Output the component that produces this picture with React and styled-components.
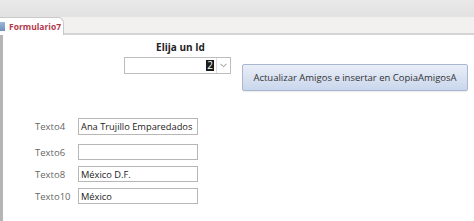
import styled, {createGlobalStyle} from "styled-components";

const GlobalStyle = createGlobalStyle`
  html, body {
    margin: 0;
    padding: 0;
    background: #ffffff;
  }
  body {
    font-family: "Open Sans", "Liberation Sans", sans-serif;
    width: 474px;
    height: 221px;
    overflow: hidden;
  }
`

const Frame = styled.div`
  width: 474px;
  height: 221px;
  display: flex;
  flex-direction: column;
  background: #ffffff;
`
const TopBand = styled.div`
  height: 17px;
  background: linear-gradient(#e9e9e9, #e2e2e2);
`
const TabBar = styled.div`
  height: 16px;
  background: #f2f1ef;
  border-bottom: 2px solid #d4d4d4;
  display: flex;
  align-items: flex-end;
`
const Tab = styled.div`
  height: 17px;
  margin-bottom: -2px;
  width: 63px;
  background: #ffffff;
  border: 1px solid #c9c9c9;
  border-bottom: none;
  border-left: none;
  border-radius: 0 6px 0 0;
  display: flex;
  align-items: center;
  gap: 4px;
  font-size: 8.5px;
  font-weight: 700;
  color: #b3384a;
`
const TabIcon = styled.div`
  width: 5px;
  height: 9px;
  background: linear-gradient(#9fb7d8, #6f8fbf);
`
const Body = styled.div`
  flex: 1;
  display: flex;
  border-left: 3px solid #b5b5b5;
`
const Form = styled.div`
  flex: 1;
  display: flex;
  flex-direction: column;
`
const TopRow = styled.div`
  display: flex;
  padding-top: 5px;
`
const IdBlock = styled.div`
  width: 107px;
  margin-left: 121px;
  display: flex;
  flex-direction: column;
  align-items: center;
`
const IdLabel = styled.div`
  font-size: 10px;
  font-weight: 700;
  color: #222;
  height: 15px;
  line-height: 15px;
  margin-left: 6px;
`
const Combo = styled.div`
  margin-top: 2px;
  width: 105px;
  height: 15px;
  border: 1px solid #bdbdbd;
  display: flex;
  align-items: center;
  justify-content: flex-end;
  font-size: 10px;
  color: #fff;
`
const Selected = styled.span`
  background: #1a1a1a;
  line-height: 11px;
  padding: 0 1px;
`
const Arrow = styled.div`
  width: 13px;
  height: 100%;
  border-left: 1px solid #dcdcdc;
  display: flex;
  align-items: center;
  justify-content: center;
  margin-left: 2px;
`
const ActionBtn = styled.div`
  margin-left: 11px;
  margin-top: 24px;
  width: 224px;
  height: 25px;
  border: 1px solid #a9b8d0;
  border-radius: 2px;
  background: linear-gradient(#e9eef7, #c9d6ec);
  display: flex;
  align-items: center;
  justify-content: center;
  font-size: 9.5px;
  color: #333;
  box-shadow: 0 1px 1px rgba(0,0,0,0.08);
`
const Fields = styled.div`
  display: grid;
  grid-template-columns: 75px 120px;
  margin-top: 27px;
`
const FieldRow = styled.div`
  display: contents;
`
const Label = styled.div`
  padding-left: 32px;
  margin-top: ${p => p.$mt}px;
  font-size: 9.5px;
  color: #666;
  display: flex;
  align-items: center;
  height: ${p => p.$h}px;
`
const Input = styled.div`
  margin-top: ${p => p.$mt}px;
  height: ${p => p.$h - 2}px;
  border: 1px solid #b7b7b7;
  padding-left: 2px;
  display: flex;
  align-items: center;
  font-size: 9.3px;
  color: #222;
  white-space: nowrap;
`

const fields = [
    {label: "Texto4", value: "Ana Trujillo Emparedados", h: 17, mt: 0},
    {label: "Texto6", value: "", h: 16, mt: 9},
    {label: "Texto8", value: "México D.F.", h: 16, mt: 6},
    {label: "Texto10", value: "México", h: 16, mt: 6},
]

const App = () => {
    return (
        <Frame>
            <GlobalStyle/>
            <TopBand/>
            <TabBar>
                <Tab>
                    <TabIcon/>
                    Formulario7
                </Tab>
            </TabBar>
            <Body>
                <Form>
                    <TopRow>
                        <IdBlock>
                            <IdLabel>Elija un Id</IdLabel>
                            <Combo>
                                <Selected>2</Selected>
                                <Arrow>
                                    <svg width="7" height="5" viewBox="0 0 7 5">
                                        <path d="M0.5 0.8 L3.5 3.8 L6.5 0.8" fill="none" stroke="#8a8a8a" strokeWidth="1"/>
                                    </svg>
                                </Arrow>
                            </Combo>
                        </IdBlock>
                        <ActionBtn>Actualizar Amigos e insertar en CopiaAmigosA</ActionBtn>
                    </TopRow>
                    <Fields>
                        {fields.map(f => (
                            <FieldRow key={f.label}>
                                <Label $h={f.h} $mt={f.mt}>{f.label}</Label>
                                <Input $h={f.h} $mt={f.mt}>{f.value}</Input>
                            </FieldRow>
                        ))}
                    </Fields>
                </Form>
            </Body>
        </Frame>
    )
}

export default App
